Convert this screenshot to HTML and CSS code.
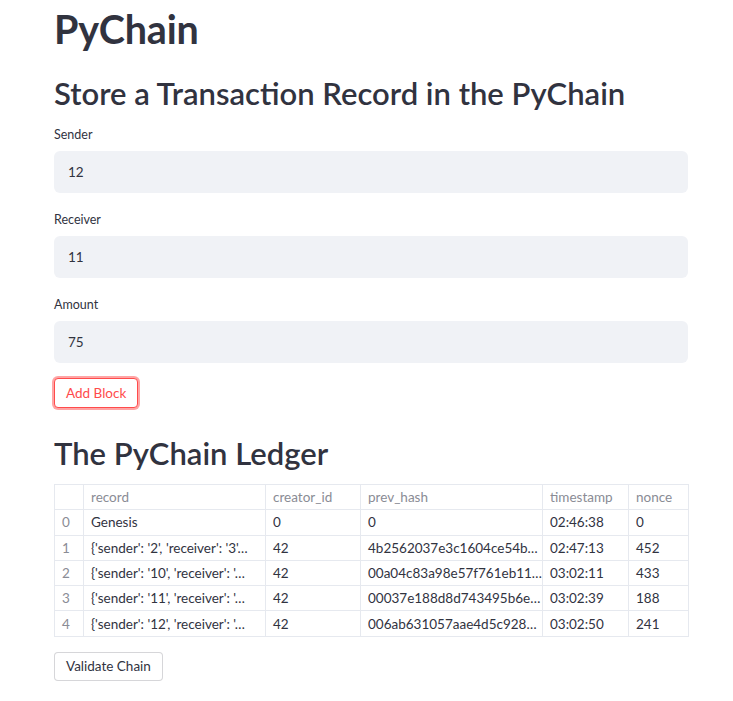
FILE: index.html
```html
<!DOCTYPE html>
<html>
<head>
<meta charset="utf-8">
<link rel="stylesheet" href="styles.css">
</head>
<body>
<main class="app">
  <h1 class="title">PyChain</h1>
  <h2 class="heading">Store a Transaction Record in the PyChain</h2>
  <div class="field">
    <label class="label">Sender</label>
    <div class="input">12</div>
  </div>
  <div class="field">
    <label class="label">Receiver</label>
    <div class="input">11</div>
  </div>
  <div class="field">
    <label class="label">Amount</label>
    <div class="input">75</div>
  </div>
  <div class="btn-row"><button class="btn btn-active">Add Block</button></div>
  <h2 class="heading heading-ledger">The PyChain Ledger</h2>
  <table class="grid">
    <thead>
      <tr><th class="c-idx"></th><th class="c-rec">record</th><th class="c-cre">creator_id</th><th class="c-hash">prev_hash</th><th class="c-ts">timestamp</th><th class="c-non">nonce</th></tr>
    </thead>
    <tbody>
      <tr><td class="idx">0</td><td>Genesis</td><td>0</td><td>0</td><td>02:46:38</td><td>0</td></tr>
      <tr><td class="idx">1</td><td>{'sender': '2', 'receiver': '3'…</td><td>42</td><td>4b2562037e3c1604ce54b…</td><td>02:47:13</td><td>452</td></tr>
      <tr><td class="idx">2</td><td>{'sender': '10', 'receiver': '…</td><td>42</td><td>00a04c83a98e57f761eb11…</td><td>03:02:11</td><td>433</td></tr>
      <tr><td class="idx">3</td><td>{'sender': '11', 'receiver': '…</td><td>42</td><td>00037e188d8d743495b6e…</td><td>03:02:39</td><td>188</td></tr>
      <tr><td class="idx">4</td><td>{'sender': '12', 'receiver': '…</td><td>42</td><td>006ab631057aae4d5c928…</td><td>03:02:50</td><td>241</td></tr>
    </tbody>
  </table>
  <div class="btn-row btn-row-validate"><button class="btn">Validate Chain</button></div>
</main>
</body>
</html>
```

FILE: styles.css
```css
* { box-sizing: border-box; }
html, body { margin: 0; padding: 0; background: #ffffff; }
body {
  font-family: "Lato", "Noto Sans", "Liberation Sans", sans-serif;
  color: #31333f;
}
.app {
  width: 634px;
  margin-left: 54px;
  display: flex;
  flex-direction: column;
}
.title {
  margin: 0;
  height: 58px;
  line-height: 58px;
  font-size: 39.5px;
  font-weight: 700;
  letter-spacing: -0.2px;
}
.heading {
  margin: 12px 0 0 0;
  height: 46px;
  line-height: 46px;
  font-size: 31px;
  font-weight: 600;
}
.heading-ledger { margin-top: 22px; }
.field { display: flex; flex-direction: column; }
.label {
  margin-top: 10px;
  height: 18px;
  line-height: 18px;
  font-size: 12.5px;
}
.field + .field .label { margin-top: 18px; }
.input {
  margin-top: 7px;
  height: 42px;
  background: #f0f2f6;
  border-radius: 6px;
  padding-left: 14px;
  line-height: 42px;
  font-size: 13.5px;
}
.btn-row { display: flex; margin-top: 14px; }
.btn {
  font-family: inherit;
  font-size: 13.5px;
  color: #31333f;
  background: #fff;
  border: 1px solid rgba(49, 51, 63, 0.2);
  border-radius: 4px;
  height: 29px;
  padding: 0 11px;
}
.btn-active {
  height: 30px;
  margin-top: 1px;
  color: #ff4b4b;
  border-color: #ff4b4b;
  box-shadow: 0 0 0 2px rgba(255, 75, 75, 0.5);
  padding: 0 11px;
}
.btn-row-validate { margin-top: 15px; }
.grid {
  margin-top: 8px;
  border-collapse: collapse;
  width: 634px;
  table-layout: fixed;
  font-size: 13.5px;
}
.grid th, .grid td {
  border: 1px solid #e6e9ef;
  height: 25.3px;
  padding: 0 7px;
  text-align: left;
  font-weight: 400;
  white-space: nowrap;
  overflow: hidden;
}
.grid th { color: #8a8c95; }
.grid td.idx { color: #8a8c95; }
.c-idx { width: 29px; }
.c-rec { width: 182px; }
.c-cre { width: 95px; }
.c-hash { width: 182px; }
.c-ts { width: 86px; }
.c-non { width: 60px; }
```
